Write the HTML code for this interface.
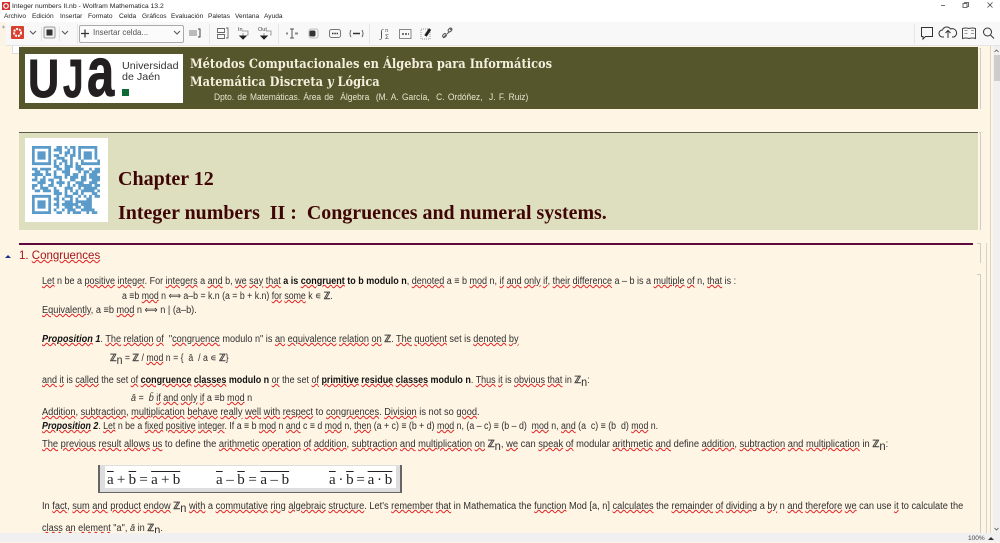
<!DOCTYPE html>
<html><head><meta charset="utf-8"><style>
html,body{margin:0;padding:0}
body{width:1000px;height:542px;position:relative;overflow:hidden;background:#fff5e5;font-family:"Liberation Sans",sans-serif;color:#333}
.a{position:absolute}
.m{position:absolute;top:13px;font-size:6.6px;color:#222;white-space:nowrap}
.l{position:absolute;white-space:nowrap;font-size:10px;line-height:12px;color:#2e2e2e;transform-origin:0 50%}
.l u{text-decoration:underline wavy #e02020 .6px;text-underline-offset:0}
.l b{color:#111}
.z{font-family:"DejaVu Sans",sans-serif;font-weight:bold;font-style:italic;font-size:10px;color:#444;-webkit-text-stroke:.45px #444}
.s{font-size:12px;position:relative;top:3px}
.m2{font-family:"Liberation Serif",serif;font-size:15px;color:#222;position:absolute;white-space:nowrap;top:471px;line-height:18px}
.ov{text-decoration:overline}
.sep{position:absolute;top:24px;width:1px;height:20px;background:#e6e6e6}
.logo{position:absolute;font-weight:bold;color:#231f20;transform-origin:0 100%;white-space:nowrap;-webkit-text-stroke:.9px #231f20}
</style></head><body>
<div class="a" style="left:0;top:0;width:1000px;height:22px;background:#fff"></div>
<div class="a" style="left:0;top:22px;width:1000px;height:24px;background:#f8f8f8;border-bottom:1px solid #e4e4e4;box-sizing:border-box"></div>
<div class="a" style="left:0;top:22px;width:6px;height:24px;background:#fbf3e6"></div>
<svg class="a" style="left:2px;top:2px" width="8" height="8" viewBox="0 0 8 8"><rect width="8" height="8" fill="#d32f2f"/><circle cx="4" cy="4" r="2.3" fill="none" stroke="#fff" stroke-width="1.2"/></svg>
<div class="a" style="left:12px;top:2px;font-size:6.8px;color:#222;white-space:nowrap;line-height:9px">Integer numbers II.nb - Wolfram Mathematica 13.2</div>
<div class="m" style="left:4px">Archivo</div><div class="m" style="left:32px">Edición</div><div class="m" style="left:60px">Insertar</div><div class="m" style="left:88px">Formato</div><div class="m" style="left:119px">Celda</div><div class="m" style="left:142px">Gráficos</div><div class="m" style="left:171px">Evaluación</div><div class="m" style="left:208px">Paletas</div><div class="m" style="left:235px">Ventana</div><div class="m" style="left:264px">Ayuda</div>
<svg class="a" style="left:0;top:0" width="1000" height="47" viewBox="0 0 1000 47" fill="none" stroke="#555">
<path d="M941 5.500h4M963 3.500h4v4h-4zM964.500 3.500v-1h4v4h-1M987.500 2.500l5 5M992.500 2.500l-5 5" stroke="#444" stroke-width=".8"/>
<path d="M2 27h3M3.500 25.500v3" stroke="#aaa"/>
<rect x="11" y="26" width="13" height="13" rx="1" fill="#d8402f" stroke="none"/><circle cx="17.500" cy="32.500" r="3.500" stroke="#fff" stroke-width="2" stroke-dasharray="2 1"/><path d="M16 30.500l3.500 2-3.500 2z" fill="#d8402f" stroke="none"/>
<path d="M30 31l3 3 3-3M62 31l3 3 3-3" stroke-width="1"/>
<rect x="44" y="27" width="11" height="11" rx="1.500" fill="#f2f2f2" stroke="#999"/><rect x="46.500" y="29.500" width="6" height="6" fill="#333" stroke="none"/>
<rect x="189" y="30" width="8" height="6" fill="#bbb" stroke="none"/><path d="M198 29h2v8h-2" stroke="#444"/>
<path d="M217.500 28.500h7v4h-7zM217.500 34.500h7v4h-7zM226 28h2v10h-2" stroke="#666" stroke-width=".9"/>
<path d="M242 31h6v4h-1M243 33v3" stroke="#888" stroke-width=".8"/><path d="M240 36h6l-3 3z" fill="#222" stroke="#222"/>
<path d="M266 31h5v4h-1M264 33v3" stroke="#888" stroke-width=".8"/><path d="M261 36h6l-3 3z" fill="#222" stroke="#222"/>
<path d="M286 33.500h2M295 33.500h3" stroke="#888" stroke-width="2"/><path d="M290 29h4M292 29v9M290 38h4" stroke="#555"/>
<rect x="309" y="29" width="9" height="9" rx="2" stroke="#bbb"/><rect x="309.500" y="30.500" width="6" height="6" rx="1.500" fill="#333" stroke="none"/>
<rect x="329.500" y="29.500" width="11" height="8" rx="2" stroke="#777"/><path d="M332 33.500h6" stroke="#333" stroke-width="1.500" stroke-dasharray="1.500 .8"/>
<path d="M351 30q-2 3.500 0 7M362 30q2 3.500 0 7" stroke="#666"/><path d="M353 33.500h7" stroke="#333" stroke-width="1.500"/>
<rect x="399.500" y="29.500" width="11.500" height="9" stroke="#888"/><path d="M402 34h7" stroke="#444" stroke-dasharray="2 1" stroke-width="1.500"/>
<rect x="421" y="29" width="9" height="10" stroke="#999" stroke-dasharray="1 1"/><path d="M425 35l4-6 1.500 1-4 6z" fill="#222" stroke="#222"/>
<path d="M443 38l3-3M447 34l2-2M450 30l2-2" stroke="#555"/><rect x="442.500" y="34" width="4" height="3" rx="1.500" transform="rotate(-45 444.500 35.500)" stroke="#555"/><rect x="448" y="28.500" width="4" height="3" rx="1.500" transform="rotate(-45 450 30)" stroke="#555"/>
<path d="M921.500 27.500h11v9h-7l-2.500 2.500v-2.500h-1.500z" stroke="#333"/>
<path d="M944 37h-1.500a3.500 3.500 0 0 1 0-7a4.500 4.500 0 0 1 8-1a3.500 3.500 0 0 1 3.500 8h-2M948 38v-7M945.500 33l2.500-2.500 2.500 2.500" stroke="#333"/>
<path d="M962.500 28.500q3-1 6.500 0q3.500-1 6.500 0v10q-3-1-6.500 0q-3.500-1-6.500 0z" stroke="#444"/><path d="M964.500 30.500h3M971 30.500h3M964.500 33.500h3M971 33.500h3" stroke="#999"/>
<circle cx="987.500" cy="32" r="4" stroke="#333"/><path d="M990.500 35l3.500 3.500" stroke="#333"/>
<text x="238" y="31" font-size="5.500" fill="#444" stroke="none" font-family="Liberation Sans">In</text>
<text x="258" y="31" font-size="5.500" fill="#444" stroke="none" font-family="Liberation Sans">Out</text>
<text x="380" y="37" font-size="11" fill="#444" stroke="none" font-family="Liberation Serif" font-style="italic">∫</text>
<text x="385" y="32" font-size="6" fill="#444" stroke="none" font-family="Liberation Serif">π</text>
<text x="385" y="39" font-size="6.500" fill="#444" stroke="none" font-family="Liberation Sans">Σ</text>
</svg>
<div class="sep" style="left:77px"></div><div class="sep" style="left:209px"></div><div class="sep" style="left:278px"></div><div class="sep" style="left:369px"></div><div class="sep" style="left:914px"></div><div class="sep" style="left:41px;height:14px;top:27px"></div><div class="sep" style="left:59px;height:14px;top:27px"></div>
<div class="a" style="left:78.500px;top:24.500px;width:103px;height:16px;border:1px solid #aaa;border-radius:2px;background:#fbfbfb"></div>
<svg class="a" style="left:0;top:0" width="200" height="47" fill="none" stroke="#555"><path d="M81 33.500h8M85 29.500v8" stroke="#333" stroke-width="1.200"/><path d="M174 31l3 3 3-3"/></svg>
<div class="a" style="left:93px;top:28px;font-size:8px;line-height:10px;color:#555;white-space:nowrap">Insertar celda...</div>

<div class="a" style="left:12px;top:46px;width:11px;height:8px;background:#fff;border:1px solid #ddd;border-top:0;box-sizing:border-box"></div>
<div class="a" style="left:19px;top:47px;width:959px;height:62px;background:#55562c"></div>
<div class="a" style="left:25px;top:54px;width:158px;height:49px;background:#fff;overflow:hidden"></div>
<div class="logo" style="left:28px;top:52px;font-size:54px;line-height:54px;transform:scaleX(.8)">U</div>
<div class="logo" style="left:63px;top:52px;font-size:54px;line-height:54px;transform:scaleX(.68)">J</div>
<div class="logo" style="left:87px;top:37px;font-size:70px;line-height:70px;transform:scaleX(.7)">a</div>
<div class="a" style="left:122px;top:61px;font-size:10.500px;line-height:11px;color:#333;white-space:nowrap;transform:scaleX(1.02);transform-origin:0 0">Universidad<br>de Jaén</div>
<div class="a" style="left:122px;top:89px;width:7px;height:7px;background:#0d6b36"></div>
<div class="a" style="left:190px;top:56px;font:bold 13.300px/17px 'DejaVu Serif',serif;color:#f4eedc;white-space:nowrap;transform:scaleX(.86);transform-origin:0 0">Métodos Computacionales en Álgebra para Informáticos</div>
<div class="a" style="left:190px;top:74px;font:bold 13.300px/17px 'DejaVu Serif',serif;color:#f4eedc;white-space:nowrap;transform:scaleX(.855);transform-origin:0 0">Matemática Discreta <i>y</i> Lógica</div>
<div class="a" style="left:214px;top:91px;font-size:9px;line-height:12px;color:#e8e4cf;white-space:nowrap;word-spacing:1px;transform:scaleX(.935);transform-origin:0 0">Dpto. de Matemáticas. Área de &nbsp;Álgebra &nbsp;(M. A. García, &nbsp;C. Ordóñez, &nbsp;J. F. Ruiz)</div>

<div class="a" style="left:19px;top:132px;width:959px;height:98px;background:#dedfbf;border-top:1px solid #5a5a48;box-sizing:border-box"></div>
<div class="a" style="left:25px;top:138px;width:83px;height:84px;background:#fff"></div>
<svg class="a" style="left:32px;top:146px" width="68" height="68" viewBox="0 0 25 25" fill="none" stroke="#5a9bc9" stroke-width="1.040">
<path d="M0 .5h7m2 0h2m1 0h1m1 0h2m1 0h7M0 1.500h1m5 0h1m1 0h3m2 0h1m1 0h1m1 0h1m5 0h1M0 2.500h1m1 0h3m1 0h1m3 0h1m1 0h2m1 0h1m1 0h1m1 0h3m1 0h1M0 3.500h1m1 0h3m1 0h1m1 0h2m2 0h1m1 0h2m1 0h1m1 0h3m1 0h1M0 4.500h1m1 0h3m1 0h1m2 0h3m2 0h1m2 0h1m1 0h3m1 0h1M0 5.500h1m5 0h1m1 0h1m2 0h2m1 0h1m3 0h1m5 0h1M0 6.500h7m1 0h1m1 0h1m1 0h1m1 0h1m1 0h1m1 0h7M8 7.500h2m2 0h3m1 0h2M0 8.500h2m1 0h4m2 0h2m1 0h2m2 0h3m2 0h1m1 0h2M1 9.500h2m2 0h1m2 0h1m2 0h3m3 0h1m1 0h2m1 0h3M0 10.500h4m1 0h2m1 0h1m3 0h2m1 0h2m2 0h1m1 0h3M1 11.500h1m2 0h1m3 0h3m1 0h1m1 0h3m1 0h2m1 0h4M0 12.500h2m1 0h2m1 0h2m2 0h1m3 0h2m2 0h2m2 0h3M2 13.500h3m2 0h1m1 0h3m1 0h1m2 0h3m2 0h3M0 14.500h2m1 0h1m2 0h2m2 0h1m2 0h1m1 0h1m1 0h5m1 0h2M0 15.500h1m2 0h3m2 0h1m3 0h3m2 0h1m1 0h5M1 16.500h2m1 0h3m1 0h2m2 0h1m1 0h1m1 0h1m1 0h5m1 0h1M8 17.500h3m1 0h1m2 0h2m1 0h1m3 0h2M0 18.500h7m2 0h1m2 0h3m2 0h1m1 0h1m1 0h1m1 0h2M0 19.500h1m5 0h1m1 0h2m1 0h1m2 0h1m1 0h1m3 0h2M0 20.500h1m1 0h3m1 0h1m2 0h1m2 0h3m1 0h6M0 21.500h1m1 0h3m1 0h1m1 0h2m1 0h6m1 0h4M0 22.500h1m1 0h3m1 0h1m2 0h1m2 0h3m1 0h2m1 0h3M0 23.500h1m5 0h1m1 0h1m2 0h1m1 0h3m2 0h5M0 24.500h7m2 0h2m2 0h1m1 0h3m2 0h1m1 0h2"/>
</svg>
<div class="a" style="left:118px;top:167px;font:bold 20px/25px 'Liberation Serif',serif;color:#3f0505;white-space:nowrap">Chapter 12</div>
<div class="a" style="left:118px;top:201px;font:bold 20px/25px 'Liberation Serif',serif;color:#3f0505;white-space:nowrap;transform:scaleX(.996);transform-origin:0 0">Integer numbers &nbsp;II : &nbsp;Congruences and numeral systems.</div>

<div class="a" style="left:19px;top:243px;width:954px;height:2px;background:#5e0a3e"></div>
<svg class="a" style="left:5px;top:254px" width="6" height="5"><path d="M0 4l3-3 3 3z" fill="#1c2f86"/></svg>
<div class="a" style="left:19px;top:249px;font-size:11.500px;line-height:14px;color:#a5151a;white-space:nowrap">1. <span style="text-decoration:underline wavy #e02020 .6px;text-underline-offset:0">Congruences</span></div>

<div class="l" style="left:42px;top:276px;transform:scaleX(.90)"><u>Let</u> n be a <u>positive</u> <u>integer</u>. For <u>integers</u> a <u>and</u> b, <u>we</u> <u>say</u> <u>that</u> <b>a is <u>congruent</u> to b modulo n</b>, <u>denoted</u> a ≡ b <u>mod</u> n, <u>if</u> <u>and</u> <u>only</u> <u>if</u>, <u>their</u> <u>difference</u> a – b is a <u>multiple</u> <u>of</u> n, <u>that</u> is :</div>
<div class="l" style="left:122px;top:291px;transform:scaleX(.875)">a ≡b <u>mod</u> n ⟺ a–b = k.n (a = b + k.n) <u>for</u> <u>some</u> k ∊ <span class="z">ℤ</span>.</div>
<div class="l" style="left:42px;top:305px;transform:scaleX(.917)"><u>Equivalently</u>, a ≡b <u>mod</u> n ⟺ n | (a–b).</div>
<div class="l" style="left:42px;top:334px;transform:scaleX(.914)"><b><i><u>Proposition</u> 1</i></b>. <u>The</u> <u>relation</u> <u>of</u> &nbsp;"<u>congruence</u> modulo n" is <u>an</u> <u>equivalence</u> <u>relation</u> <u>on</u> <span class="z">ℤ</span>. <u>The</u> <u>quotient</u> set is <u>denoted</u> <u>by</u></div>
<div class="l" style="left:110px;top:351px;transform:scaleX(.875)"><span class="z">ℤ</span><span class="s">n</span> = <span class="z">ℤ</span> / <u>mod</u> n = { &nbsp;ā &nbsp;/ a ∊ <span class="z">ℤ</span>}</div>
<div class="l" style="left:42px;top:373px;transform:scaleX(.896)"><u>and</u> <u>it</u> is <u>called</u> the set <u>of</u> <b><u>congruence</u> <u>classes</u> modulo n</b> <u>or</u> the set <u>of</u> <b><u>primitive</u> <u>residue</u> <u>classes</u> modulo n</b>. <u>Thus</u> <u>it</u> is <u>obvious</u> <u>that</u> in <span class="z">ℤ</span><span class="s">n</span>:</div>
<div class="l" style="left:131px;top:393px;transform:scaleX(.90)"><i>ā</i> = &nbsp;<i>b̄</i> <u>if</u> <u>and</u> <u>only</u> <u>if</u> a ≡b <u>mod</u> n</div>
<div class="l" style="left:42px;top:407px;transform:scaleX(.927)"><u>Addition</u>, <u>subtraction</u>, <u>multiplication</u> <u>behave</u> <u>really</u> <u>well</u> <u>with</u> <u>respect</u> to <u>congruences</u>. <u>Division</u> is not so <u>good</u>.</div>
<div class="l" style="left:42px;top:421px;transform:scaleX(.88)"><b><i><u>Proposition</u> 2</i></b>. <u>Let</u> n be a <u>fixed</u> <u>positive</u> <u>integer</u>. If a ≡ b <u>mod</u> n <u>and</u> c ≡ d <u>mod</u> n, <u>then</u> (a + c) ≡ (b + d) <u>mod</u> n, (a – c) ≡ (b – d) &nbsp;<u>mod</u> n, <u>and</u> (a &nbsp;c) ≡ (b &nbsp;d) <u>mod</u> n.</div>
<div class="l" style="left:42px;top:437px;transform:scaleX(.933)"><u>The</u> <u>previous</u> <u>result</u> <u>allows</u> <u>us</u> to define the <u>arithmetic</u> <u>operation</u> <u>of</u> <u>addition</u>, <u>subtraction</u> <u>and</u> <u>multiplication</u> <u>on</u> <span class="z">ℤ</span><span class="s">n</span>, <u>we</u> can <u>speak</u> <u>of</u> modular <u>arithmetic</u> <u>and</u> define <u>addition</u>, <u>subtraction</u> <u>and</u> <u>multiplication</u> in <span class="z">ℤ</span><span class="s">n</span>:</div>

<div class="a" style="left:98px;top:465px;height:27px;width:300px;background:#ddd;border:1px solid #666;border-top:0;border-left-width:2px;border-right-width:2px"></div>
<div class="a" style="left:105px;top:466px;width:291px;height:22px;background:#fff"></div>
<div class="m2" style="left:107px;word-spacing:-.5px"><span class="ov">a</span> + <span class="ov">b</span> = <span class="ov">a + b</span></div>
<div class="m2" style="left:216px;word-spacing:-.2px"><span class="ov">a</span> – <span class="ov">b</span> = <span class="ov">a – b</span></div>
<div class="m2" style="left:329px;word-spacing:-1px"><span class="ov">a</span> · <span class="ov">b</span> = <span class="ov">a · b</span></div>

<div class="l" style="left:42px;top:499px;transform:scaleX(.922)">In <u>fact</u>, <u>sum</u> <u>and</u> <u>product</u> <u>endow</u> <span class="z">ℤ</span><span class="s">n</span> <u>with</u> a <u>commutative</u> <u>ring</u> <u>algebraic</u> <u>structure</u>. Let's <u>remember</u> <u>that</u> in Mathematica the <u>function</u> Mod [a, n] <u>calculates</u> the <u>remainder</u> <u>of</u> <u>dividing</u> a <u>by</u> n <u>and</u> <u>therefore</u> <u>we</u> can use <u>it</u> to calculate the</div>
<div class="l" style="left:42px;top:521px;transform:scaleX(.916)"><u>class</u> <u>an</u> <u>element</u> "a", <i>ā</i> in <span class="z">ℤ</span><span class="s">n</span>.</div>

<div class="a" style="left:979px;top:48px;width:2px;height:61px;border-right:1px solid #ccc;border-top:1px solid #ccc;box-sizing:border-box"></div>
<div class="a" style="left:979px;top:132px;width:2px;height:98px;border-right:1px solid #ccc;border-top:1px solid #ccc;box-sizing:border-box"></div>
<div class="a" style="left:977px;top:243px;width:4px;height:20px;border-right:1px solid #ccc;border-top:1px solid #ccc;box-sizing:border-box"></div>
<div class="a" style="left:977px;top:274px;width:4px;height:259px;border-right:1px solid #ccc;border-top:1px solid #ccc;box-sizing:border-box"></div>
<div class="a" style="left:986px;top:243px;width:1px;height:290px;background:#d8d2c8"></div>
<div class="a" style="left:990px;top:46px;width:1px;height:487px;background:#d8d2c8"></div>
<div class="a" style="left:993px;top:46px;width:7px;height:496px;background:#f0f0f0"></div>
<div class="a" style="left:994px;top:55px;width:6px;height:26px;background:#cdcdcd"></div>
<svg class="a" style="left:993px;top:46px" width="7" height="490"><path d="M1.500 6l2-2 2 2M1.500 482l2 2 2-2" fill="none" stroke="#555" stroke-width=".8"/></svg>
<div class="a" style="left:0;top:533px;width:1000px;height:9px;background:#f0f0f0"></div>
<div class="a" style="left:968px;top:535px;font-size:6.500px;line-height:8px;color:#444">100%</div>
<svg class="a" style="left:988px;top:536px" width="6" height="4"><path d="M0 4l3-3 3 3z" fill="#333"/></svg>
</body></html>
